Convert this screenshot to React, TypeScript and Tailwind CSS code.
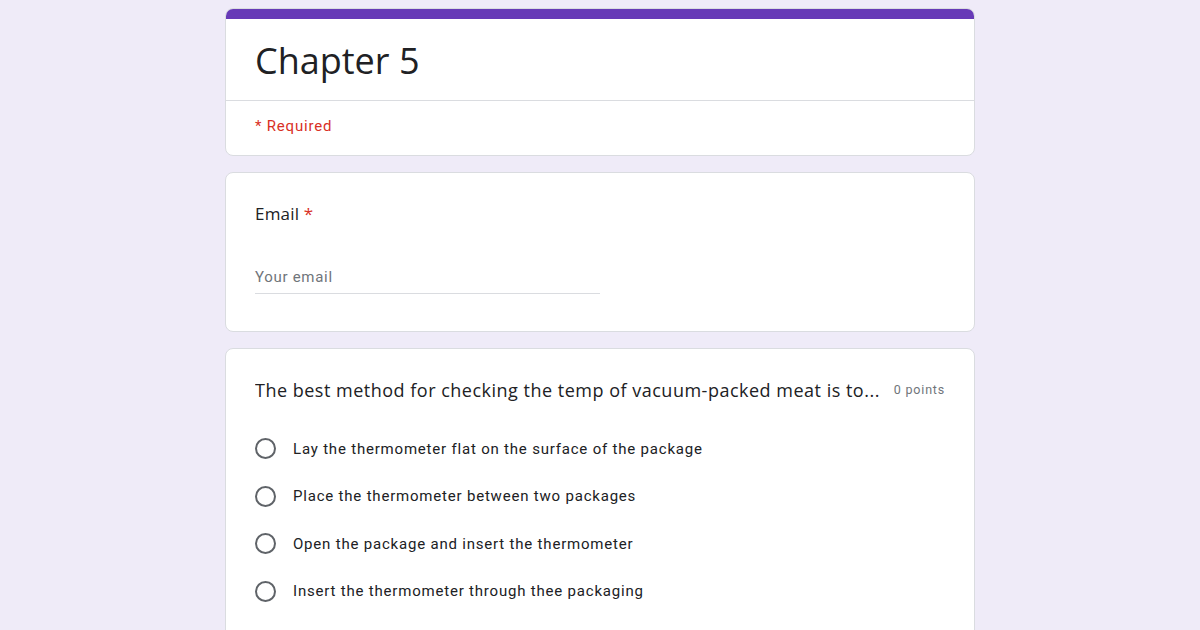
const options = [
  "Lay the thermometer flat on the surface of the package",
  "Place the thermometer between two packages",
  "Open the package and insert the thermometer",
  "Insert the thermometer through thee packaging",
];

function Radio() {
  return <span className="block size-[21px] shrink-0 rounded-full border-2 border-[#5f6368]" />;
}

export default function App() {
  return (
    <div className="min-h-screen bg-[#efebf8] pt-2 font-['Roboto',sans-serif] text-[#202124]">
      <div className="mx-auto flex w-[750px] flex-col gap-4 pb-10">
        {/* Header card */}
        <div className="overflow-hidden rounded-lg border border-[#dadce0] bg-white">
          <div className="h-[10px] bg-[#673ab7]" />
          <div className="flex h-[82px] items-center border-b border-[#dadce0] px-[29px] pt-[2px]">
            <h1 className="font-['Open_Sans',sans-serif] text-[36px] leading-none text-[#202124]">Chapter 5</h1>
          </div>
          <div className="h-[54px] px-[29px] pt-[15px] text-[15px] leading-5 tracking-[0.8px] text-[#d93025]">
            * Required
          </div>
        </div>

        {/* Email card */}
        <div className="rounded-lg border border-[#dadce0] bg-white px-[29px] pt-[29px] pb-[37px]">
          <div className="font-['Open_Sans',sans-serif] text-[17px] leading-6 tracking-[0.2px]">
            Email <span className="text-[#d93025]">*</span>
          </div>
          <div className="mt-[36px] flex h-[32px] w-[345px] items-center border-b border-[#dadce0] text-[15px] tracking-[0.7px] text-[#70757a]">
            Your email
          </div>
        </div>

        {/* Question card */}
        <div className="rounded-lg border border-[#dadce0] bg-white px-[29px] pt-[29px] pb-8">
          <div className="flex items-center gap-3">
            <div className="min-w-0 flex-1 truncate font-['Open_Sans',sans-serif] text-[18px] leading-6 tracking-[0.5px]">
              The best method for checking the temp of vacuum-packed meat is to...
            </div>
            <div className="shrink-0 text-[12.5px] tracking-[0.8px] text-[#70757a]">0 points</div>
          </div>
          <div className="mt-[23px] flex flex-col">
            {options.map((o) => (
              <label key={o} className="flex h-[47.5px] items-center gap-[17px]">
                <Radio />
                <span className="text-[15px] tracking-[0.8px] text-[#202124]">{o}</span>
              </label>
            ))}
          </div>
        </div>
      </div>
    </div>
  );
}
